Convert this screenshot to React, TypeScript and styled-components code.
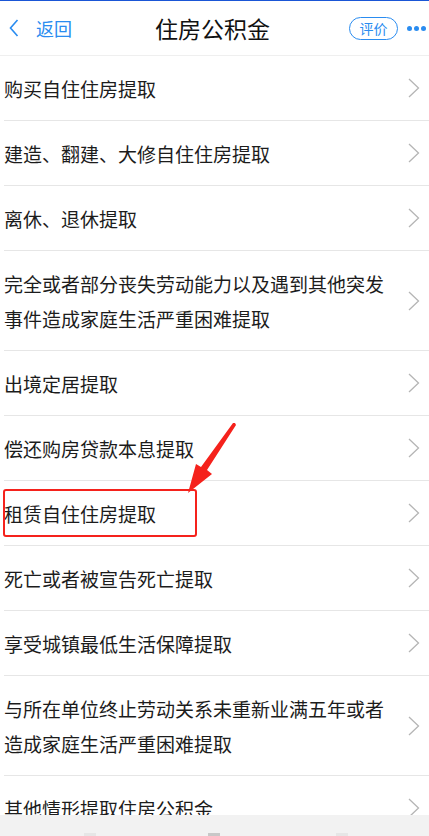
import React from "react";
import styled, { createGlobalStyle } from "styled-components";

const Global = createGlobalStyle`
  html, body { margin: 0; padding: 0; background: #fff; }
  body { font-family: "Noto Sans CJK SC", "Noto Sans", sans-serif; overflow: hidden; }
`;

const Page = styled.div`
  position: relative;
  width: 429px;
  height: 836px;
  overflow: hidden;
  background: #fff;
  border-top: 1px solid #1a56d6;
  box-sizing: border-box;
`;

const Header = styled.header`
  height: 54px;
  display: flex;
  align-items: center;
  justify-content: space-between;
  border-bottom: 1px solid #efefef;
  padding: 0 3px 0 9px;
`;

const Back = styled.div`
  display: flex;
  align-items: center;
  gap: 17px;
  color: #2a8cf0;
  font-size: 18px;
  width: 110px;
`;

const Title = styled.h1`
  margin: 0;
  font-size: 23px;
  font-weight: 400;
  color: #111;
  letter-spacing: 0;
`;

const Right = styled.div`
  display: flex;
  align-items: center;
  gap: 9px;
  width: 120px;
  justify-content: flex-end;
`;

const Pill = styled.span`
  display: inline-flex;
  align-items: center;
  justify-content: center;
  width: 49px;
  height: 23px;
  box-sizing: border-box;
  border: 1.5px solid #2a8cf0;
  border-radius: 12px;
  color: #2a8cf0;
  font-size: 14px;
`;

const Dots = styled.div`
  display: flex;
  gap: 2px;
`;

const Dot = styled.span`
  width: 5px;
  height: 5px;
  border-radius: 50%;
  background: #2a8cf0;
`;

const List = styled.ul`
  list-style: none;
  margin: 0;
  padding: 0;
`;

const Row = styled.li`
  margin-left: 4px;
  display: flex;
  align-items: center;
  justify-content: space-between;
  border-bottom: 1px solid #e6e6e6;
  padding: 14.5px 9px 14.5px 0;
`;

const Label = styled.span`
  font-size: 19px;
  line-height: 35px;
  color: #1c1c1c;
  max-width: 384px;
`;

const HighlightBox = styled.div`
  position: absolute;
  left: 3px;
  top: 488px;
  width: 194px;
  height: 48px;
  box-sizing: border-box;
  border: 2.5px solid #f5221c;
  border-radius: 3px;
  pointer-events: none;
`;

const ArrowSvg = styled.svg`
  position: absolute;
  left: 180px;
  top: 415px;
  pointer-events: none;
`;

const BottomBar = styled.div`
  position: absolute;
  left: 0;
  right: 0;
  bottom: 0;
  height: 21px;
  background: #f2f2f2;
`;

const BarMark = styled.span<{ $x: number; $c: string }>`
  position: absolute;
  bottom: 0;
  left: ${(p) => p.$x}px;
  width: 12px;
  height: 3px;
  background: ${(p) => p.$c};
`;

const Chevron = () => (
  <svg width="12" height="20" viewBox="0 0 12 20">
    <path d="M1 1 L10.5 10 L1 19" fill="none" stroke="#b5b5b5" strokeWidth="1.3" />
  </svg>
);

const items = [
  "购买自住住房提取",
  "建造、翻建、大修自住住房提取",
  "离休、退休提取",
  "完全或者部分丧失劳动能力以及遇到其他突发事件造成家庭生活严重困难提取",
  "出境定居提取",
  "偿还购房贷款本息提取",
  "租赁自住住房提取",
  "死亡或者被宣告死亡提取",
  "享受城镇最低生活保障提取",
  "与所在单位终止劳动关系未重新业满五年或者造成家庭生活严重困难提取",
  "其他情形提取住房公积金",
];

export default function App() {
  return (
    <>
      <Global />
      <Page>
        <Header>
          <Back>
            <svg width="10" height="18" viewBox="0 0 10 18">
              <path d="M8.5 1 L1.5 9 L8.5 17" fill="none" stroke="#2a8cf0" strokeWidth="1.6" />
            </svg>
            <span>返回</span>
          </Back>
          <Title>住房公积金</Title>
          <Right>
            <Pill>评价</Pill>
            <Dots>
              <Dot />
              <Dot />
              <Dot />
            </Dots>
          </Right>
        </Header>
        <List>
          {items.map((t) => (
            <Row key={t}>
              <Label>{t}</Label>
              <Chevron />
            </Row>
          ))}
        </List>
        <HighlightBox />
        <ArrowSvg width="60" height="80" viewBox="0 0 60 80">
          <polygon
            points="55,7 56,9 27,54 32,58 8,77 16,48 21,51 53,7"
            fill="#f5221c"
          />
        </ArrowSvg>
        <BottomBar>
          <BarMark $x={84} $c="#e6e6e6" />
          <BarMark $x={208} $c="#c8c8c8" />
          <BarMark $x={336} $c="#e6e6e6" />
        </BottomBar>
      </Page>
    </>
  );
}
